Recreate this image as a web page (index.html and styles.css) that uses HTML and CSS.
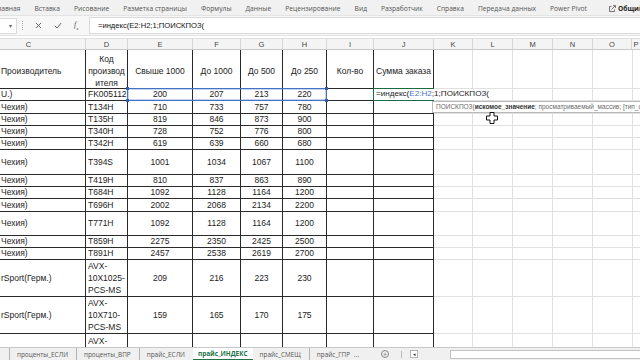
FILE: index.html
```html
<!DOCTYPE html>
<html lang="ru">
<head>
<meta charset="utf-8">
<title>Excel — прайс_ИНДЕКС</title>
<link rel="stylesheet" href="styles.css">
</head>
<body>
<div class="app">
  <nav class="ribbon">
    <span class="tab first">Главная</span>
    <span class="tab">Вставка</span>
    <span class="tab">Рисование</span>
    <span class="tab">Разметка страницы</span>
    <span class="tab">Формулы</span>
    <span class="tab">Данные</span>
    <span class="tab">Рецензирование</span>
    <span class="tab">Вид</span>
    <span class="tab">Разработчик</span>
    <span class="tab">Справка</span>
    <span class="tab">Передача данных</span>
    <span class="tab">Power Pivot</span>
    <span class="share"><svg width="7" height="7" viewBox="0 0 7 7"><path d="M2.5 1.5H0.5V6.5H5.5V4.5" fill="none" stroke="#555" stroke-width="0.8"/><path d="M2.5 4.5L6.3 0.7M4 0.6H6.4V3" fill="none" stroke="#555" stroke-width="0.8"/></svg>Общий доступ</span>
  </nav>

  <div class="fbar">
    <div class="namebox"><span class="nb-arrow">▾</span></div>
    <div class="fsep"></div>
    <div class="ficons">
      <svg class="ic" width="7" height="7" viewBox="0 0 7 7"><path d="M1 1L6 6M6 1L1 6" stroke="#555" stroke-width="0.9"/></svg>
      <svg class="ic" width="8" height="7" viewBox="0 0 8 7"><path d="M0.8 3.8L3 6L7.2 1" fill="none" stroke="#555" stroke-width="0.9"/></svg>
      <span class="fx">f<sub>x</sub></span>
    </div>
    <div class="finput">=индекс(E2:H2;1;ПОИСКПОЗ(</div>
  </div>

  <div class="colheads">
    <div class="ch chc">C</div><div class="ch">D</div><div class="ch">E</div><div class="ch">F</div><div class="ch">G</div><div class="ch">H</div><div class="ch">I</div><div class="ch">J</div><div class="ch">K</div><div class="ch">L</div><div class="ch">M</div><div class="ch">N</div><div class="ch">O</div><div class="ch last">P</div>
  </div>

  <div class="sheet">
    <div class="row h39 head">
      <div class="l">Производитель</div>
      <div class="n wrap">Код<br>производ<br>ителя</div>
      <div class="n">Свыше 1000</div>
      <div class="n">До 1000</div>
      <div class="n">До 500</div>
      <div class="n">До 250</div>
      <div class="n">Кол-во</div>
      <div class="n">Сумма заказа</div>
      <div class="rest"></div>
    </div>
    <div class="row h12">
      <div class="l">U.)</div><div class="d">FK005112</div>
      <div class="n">200</div><div class="n">207</div><div class="n">213</div><div class="n">220</div>
      <div></div>
      <div class="j3"><span class="edit">=индекс(<span class="ref">E2:H2</span>;1;ПОИСКПОЗ(</span></div>
      <div class="rest"></div>
    </div>
    <div class="row h13">
      <div class="l">Чехия)</div><div class="d">T134H</div>
      <div class="n">710</div><div class="n">733</div><div class="n">757</div><div class="n">780</div>
      <div></div><div></div><div class="rest"></div>
    </div>
    <div class="row h12">
      <div class="l">Чехия)</div><div class="d">T135H</div>
      <div class="n">819</div><div class="n">846</div><div class="n">873</div><div class="n">900</div>
      <div></div><div></div><div class="rest"></div>
    </div>
    <div class="row h12">
      <div class="l">Чехия)</div><div class="d">T340H</div>
      <div class="n">728</div><div class="n">752</div><div class="n">776</div><div class="n">800</div>
      <div></div><div></div><div class="rest"></div>
    </div>
    <div class="row h12">
      <div class="l">Чехия)</div><div class="d">T342H</div>
      <div class="n">619</div><div class="n">639</div><div class="n">660</div><div class="n">680</div>
      <div></div><div></div><div class="rest"></div>
    </div>
    <div class="row h25">
      <div class="l">Чехия)</div><div class="d">T394S</div>
      <div class="n">1001</div><div class="n">1034</div><div class="n">1067</div><div class="n">1100</div>
      <div></div><div></div><div class="rest"></div>
    </div>
    <div class="row h12">
      <div class="l">Чехия)</div><div class="d">T419H</div>
      <div class="n">810</div><div class="n">837</div><div class="n">863</div><div class="n">890</div>
      <div></div><div></div><div class="rest"></div>
    </div>
    <div class="row h12">
      <div class="l">Чехия)</div><div class="d">T684H</div>
      <div class="n">1092</div><div class="n">1128</div><div class="n">1164</div><div class="n">1200</div>
      <div></div><div></div><div class="rest"></div>
    </div>
    <div class="row h13">
      <div class="l">Чехия)</div><div class="d">T696H</div>
      <div class="n">2002</div><div class="n">2068</div><div class="n">2134</div><div class="n">2200</div>
      <div></div><div></div><div class="rest"></div>
    </div>
    <div class="row h24">
      <div class="l">Чехия)</div><div class="d">T771H</div>
      <div class="n">1092</div><div class="n">1128</div><div class="n">1164</div><div class="n">1200</div>
      <div></div><div></div><div class="rest"></div>
    </div>
    <div class="row h12">
      <div class="l">Чехия)</div><div class="d">T859H</div>
      <div class="n">2275</div><div class="n">2350</div><div class="n">2425</div><div class="n">2500</div>
      <div></div><div></div><div class="rest"></div>
    </div>
    <div class="row h12">
      <div class="l">Чехия)</div><div class="d">T891H</div>
      <div class="n">2457</div><div class="n">2538</div><div class="n">2619</div><div class="n">2700</div>
      <div></div><div></div><div class="rest"></div>
    </div>
    <div class="row h37">
      <div class="l">rSport(Герм.)</div><div class="d wrap">AVX-<br>10X1025-<br>PCS-MS</div>
      <div class="n">209</div><div class="n">216</div><div class="n">223</div><div class="n">230</div>
      <div></div><div></div><div class="rest"></div>
    </div>
    <div class="row h37">
      <div class="l">rSport(Герм.)</div><div class="d wrap">AVX-<br>10X710-<br>PCS-MS</div>
      <div class="n">159</div><div class="n">165</div><div class="n">170</div><div class="n">175</div>
      <div></div><div></div><div class="rest"></div>
    </div>
    <div class="row h37">
      <div></div><div class="d top">AVX-</div>
      <div></div><div></div><div></div><div></div>
      <div></div><div></div><div class="rest"></div>
    </div>

    <div class="range"><i class="hd tl"></i><i class="hd tr"></i><i class="hd bl"></i><i class="hd br"></i></div>
    <div class="active"></div>
    <div class="tip">ПОИСКПОЗ(<b>искомое_значение</b>; просматриваемый_массив; [тип_со</div>
    <svg class="cursor" width="12" height="12" viewBox="0 0 12 12"><path d="M4 0.5H8V4H11.5V8H8V11.5H4V8H0.5V4H4Z" fill="#fff" stroke="#111" stroke-width="1"/></svg>
  </div>

  <footer class="tabs">
    <span class="stab part"></span>
    <span class="stab">проценты_ЕСЛИ</span>
    <span class="stab">проценты_ВПР</span>
    <span class="stab">прайс_ЕСЛИ</span>
    <span class="stab on">прайс_ИНДЕКС</span>
    <span class="stab">прайс_СМЕЩ</span>
    <span class="stab nosep">прайс_ГПР</span>
    <span class="more">...</span>
    <span class="add">+</span>
    <span class="vsep"></span>
    <span class="sbtn">◂</span>
    <span class="hscroll"></span>
  </footer>
</div>
</body>
</html>
```

FILE: styles.css
```css
* { box-sizing: border-box; margin: 0; padding: 0; }
html, body { width: 640px; height: 360px; overflow: hidden; }
body { font-family: "Liberation Sans", Arial, sans-serif; background: #fff; color: #1c1c1c; }
.app { display: flex; flex-direction: column; height: 360px; overflow: hidden; }

/* ribbon tabs */
.ribbon {
  height: 15px; flex: none; display: flex; align-items: center; gap: 14px; padding-top: 1px;
  background: #f1f1f1; font-size: 6.7px; color: #555; white-space: nowrap; overflow: hidden;
  font-family: "Open Sans", "Liberation Sans", sans-serif;
}
.ribbon .tab { flex: none; }
.ribbon .first { margin-left: -6px; }
.share { flex: none; margin-left: 8px; display: flex; align-items: center; gap: 2px; font-weight: bold; color: #262626; }

/* formula bar */
.fbar {
  height: 21px; flex: none; display: flex; align-items: center;
  background: #f7f7f7; border-top: 1px solid #e3e3e3; border-bottom: 1px solid #e3e3e3;
}
.namebox {
  width: 17px; height: 16px; background: #fff; border: 1px solid #dadada; border-left: none;
  display: flex; align-items: center; justify-content: flex-end; padding-right: 4px;
  font-size: 6px; color: #666;
}
.fsep { width: 1px; height: 9px; margin-left: 5px; border-left: 1px dotted #a8a8a8; }
.ficons { display: flex; align-items: center; margin-left: 12px; gap: 12px; width: 54px; }
.fx { font-family: "Liberation Serif", serif; font-style: italic; font-size: 8px; color: #555; line-height: 1; }
.fx sub { font-size: 5px; }
.finput {
  flex: 1; height: 17px; background: #fff; border: 1px solid #dadada; border-right: none;
  display: flex; align-items: center; padding-left: 8px; font-size: 7.6px; color: #111; white-space: nowrap;
}

/* column headers */
.colheads {
  margin-top: 2px; height: 12px; flex: none; display: grid;
  grid-template-columns: 86px 42px 65px 48px 42px 44px 47px 60px 39px 40px 40px 40px 39px 1fr;
  background: #f4f4f4; border-bottom: 1px solid #c9c9c9; border-top: 1px solid #e0e0e0;
}
.ch { border-right: 1px solid #d6d6d6; display: flex; align-items: center; justify-content: center; font-size: 7.5px; color: #444; }
.chc { padding-right: 28px; }
.ch.last { border-right: none; }

/* sheet */
.sheet { position: relative; height: 297px; flex: none; overflow: hidden; }
.row { display: grid; grid-template-columns: 86px 42px 65px 48px 42px 44px 47px 60px 1fr; }
.h39 { height: 39px; } .h12 { height: 12px; } .h13 { height: 13px; }
.h25 { height: 25px; } .h24 { height: 24px; } .h37 { height: 37px; }
.row > div {
  border-right: 1px solid #2a2a2a; border-bottom: 1px solid #2a2a2a;
  display: flex; align-items: center; overflow: hidden; white-space: nowrap;
  font-size: 8.5px; line-height: 1; color: #1c1c1c;
}
.row > .rest {
  border-right: none; border-bottom-color: #e0e0e0;
  background: repeating-linear-gradient(90deg, transparent 0 38px, #e0e0e0 38px 39px, transparent 39px 40px);
}
.row > .l { padding-left: 1px; }
.row > .d { padding-left: 2px; }
.row > .n { justify-content: center; text-align: center; }
.row > .wrap { white-space: normal; line-height: 12.3px; }
.row > .top { align-items: flex-start; padding-top: 1px; line-height: 12px; }
.head > div { padding-top: 4px; }
.head > .wrap { line-height: 12px; }
.row > .j3 { overflow: visible; }
.edit { position: relative; z-index: 1; background: #fff; padding: 1px 4px 1px 2px; white-space: nowrap; font-size: 8.1px; }
.ref { color: #4a74c9; }

/* overlays */
.range { position: absolute; left: 127px; top: 38px; width: 200px; height: 13px; border: 1px solid #4472c4; box-shadow: inset 0 0 0 1px rgba(68,114,196,0.3); }
.hd { position: absolute; width: 3px; height: 3px; background: #2f5fb3; }
.tl { left: -2px; top: -2px; } .tr { right: -2px; top: -2px; }
.bl { left: -2px; bottom: -2px; } .br { right: -2px; bottom: -2px; }
.active { position: absolute; left: 373px; top: 38px; width: 61px; height: 13px; border: 1px solid #1e6b41; }
.tip {
  position: absolute; left: 432px; top: 51px; width: 212px; height: 12px;
  background: #fff; border: 1px solid #b9b9b9; padding-left: 3px;
  font-size: 6.5px; line-height: 10px; color: #6b6b6b; white-space: nowrap; overflow: hidden;
}
.tip b { color: #333; }
.cursor { position: absolute; left: 486px; top: 62px; }

/* sheet tabs */
.tabs {
  height: 13px; flex: none; display: flex; align-items: center;
  background: #f0f0f0; border-top: 1px solid #c8c8c8; font-size: 6.4px; color: #555; white-space: nowrap;
  font-family: "Open Sans", "Liberation Sans", sans-serif;
}
.stab { height: 100%; display: flex; align-items: center; padding: 0 8px 0 7px; border-right: 1px solid #b4b4b4; flex: none; }
.stab.part { width: 10px; padding: 0; }
.stab.on { background: #fff; color: #217346; font-weight: bold; padding: 0 5px; margin-left: -1px; border-right: none; border-bottom: 1px solid #217346; }
.stab.nosep { border-right: none; padding-right: 4px; }
.more { flex: none; color: #555; }
.add {
  flex: none; margin-left: 22px; width: 8px; height: 8px; border: 1px solid #888; border-radius: 50%;
  display: flex; align-items: center; justify-content: center; font-size: 7px; line-height: 1; color: #777;
}
.vsep { flex: none; width: 1px; height: 7px; background: #bbb; margin-left: 12px; }
.sbtn {
  flex: none; margin-left: 8px; width: 8px; height: 8px; border: 1px solid #b5b5b5; background: #fff;
  display: flex; align-items: center; justify-content: center; font-size: 5px; color: #333;
}
.hscroll { flex: 1; margin-left: 32px; height: 9px; background: #fff; border: 1px solid #c2c2c2; border-right: none; }
```
